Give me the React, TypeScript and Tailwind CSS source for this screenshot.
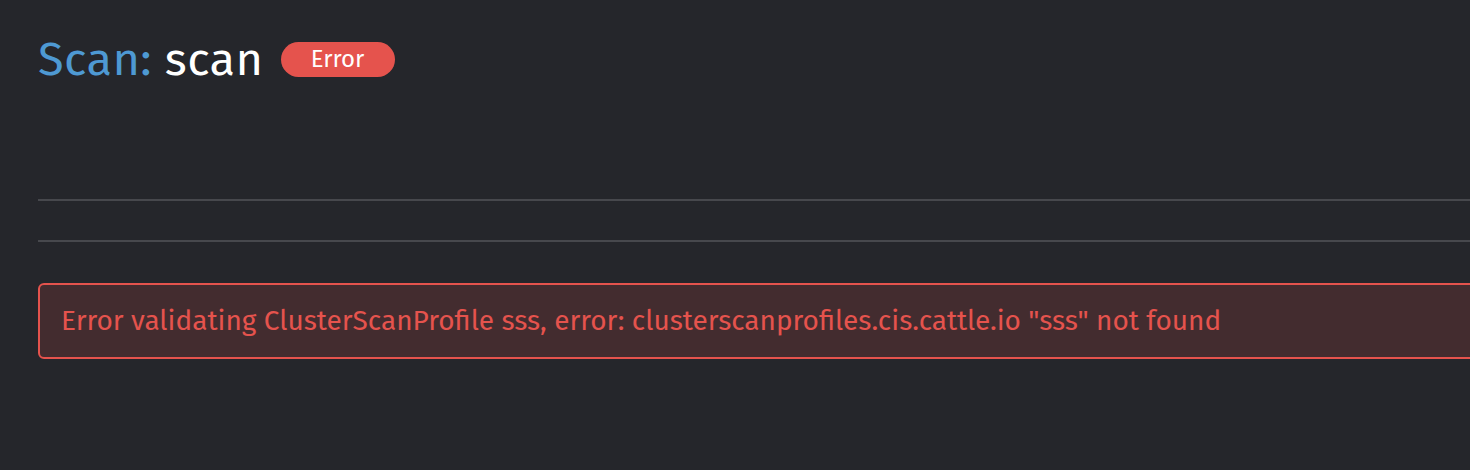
export default function App() {
  return (
    <div className="min-h-[470px] w-full bg-[#25262b] pl-[38px] pt-[31px] overflow-hidden" style={{ fontFamily: '"Fira Sans", "Noto Sans", "Open Sans", sans-serif' }}>
      <div className="flex items-center h-[56px]">
        <h1 className="text-[47px] leading-none text-white tracking-[0.4px]">
          <span className="text-[#4e99d3]">Scan:</span> scan
        </h1>
        <span className="ml-[17px] flex h-[35px] w-[114px] items-center justify-center rounded-full bg-[#e5534d] text-[24px] text-white">
          Error
        </span>
      </div>
      <div className="mt-[112px] h-[2px] w-full bg-[#47484d]" />
      <div className="mt-[39px] h-[2px] w-full bg-[#47484d]" />
      <div className="mt-[41px] mr-[-20px] flex h-[76px] items-center rounded-[6px] border-2 border-[#e5534d] bg-[#432c2f] pl-[21px]">
        <span className="text-[28px] text-[#e5534d] whitespace-nowrap">
          Error validating ClusterScanProfile sss, error: clusterscanprofiles.cis.cattle.io "sss" not found
        </span>
      </div>
    </div>
  );
}
